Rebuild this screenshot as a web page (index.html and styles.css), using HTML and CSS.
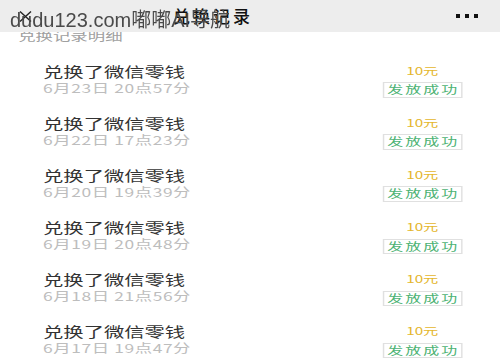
FILE: index.html
```html
<!DOCTYPE html>
<html lang="zh-CN">
<head>
<meta charset="utf-8">
<title>兑换记录</title>
<link rel="stylesheet" href="styles.css">
</head>
<body>
<header class="topbar">
  <svg class="close" width="13" height="11" viewBox="0 0 13 11"><path d="M1 0.5 L12 10.5 M12 0.5 L1 10.5" stroke="#222" stroke-width="1.4" fill="none"/></svg>
  <div class="title">兑换记录</div>
  <div class="more"><i></i><i></i><i></i></div>
</header>
<div class="watermark">dudu123.com嘟嘟AI导航</div>
<main class="app">
  <div class="section">兑换记录明细</div>
  <ul class="list">
    <li class="row"><div class="info"><div class="name">兑换了微信零钱</div><div class="date">6月23日 20点57分</div></div><div class="side"><div class="amount">10元</div><div class="status">发放成功</div></div></li>
    <li class="row"><div class="info"><div class="name">兑换了微信零钱</div><div class="date">6月22日 17点23分</div></div><div class="side"><div class="amount">10元</div><div class="status">发放成功</div></div></li>
    <li class="row"><div class="info"><div class="name">兑换了微信零钱</div><div class="date">6月20日 19点39分</div></div><div class="side"><div class="amount">10元</div><div class="status">发放成功</div></div></li>
    <li class="row"><div class="info"><div class="name">兑换了微信零钱</div><div class="date">6月19日 20点48分</div></div><div class="side"><div class="amount">10元</div><div class="status">发放成功</div></div></li>
    <li class="row"><div class="info"><div class="name">兑换了微信零钱</div><div class="date">6月18日 21点56分</div></div><div class="side"><div class="amount">10元</div><div class="status">发放成功</div></div></li>
    <li class="row"><div class="info"><div class="name">兑换了微信零钱</div><div class="date">6月17日 19点47分</div></div><div class="side"><div class="amount">10元</div><div class="status">发放成功</div></div></li>
  </ul>
</main>
</body>
</html>
```
FILE: styles.css
```css
html, body {
  margin: 0;
  padding: 0;
  background: #fff;
  overflow: hidden;
  font-family: "Noto Sans CJK SC", "Noto Sans", sans-serif;
}
.topbar {
  position: fixed;
  top: 0;
  left: 0;
  width: 500px;
  height: 32px;
  background: #ededed;
  display: flex;
  align-items: center;
  z-index: 2;
}
.close {
  margin-left: 19px;
  flex: none;
}
.title {
  margin-left: 141px;
  font-size: 17px;
  letter-spacing: 3px;
  color: #111;
  font-weight: 500;
  line-height: 20px;
}
.more {
  margin-left: auto;
  margin-right: 22px;
  display: flex;
  gap: 5px;
}
.more i {
  width: 4px;
  height: 4px;
  background: #111;
  display: block;
}
.watermark {
  position: fixed;
  top: 10px;
  left: 10px;
  font-family: "Liberation Sans", "Noto Sans CJK SC", sans-serif;
  font-size: 20px;
  line-height: 20px;
  color: #4a4a4a;
  z-index: 3;
  white-space: nowrap;
}
.app {
  width: 344.8px;
  transform: scaleX(1.45);
  transform-origin: 0 0;
  padding-top: 27.5px;
}
.section {
  padding-left: 12.5px;
  font-size: 12px;
  line-height: 16px;
  color: #a0a0a0;
  height: 16px;
}
.list {
  list-style: none;
  margin: 8.5px 0 0;
  padding: 0;
}
.row {
  display: flex;
  align-items: flex-start;
  height: 52.2px;
  box-sizing: border-box;
  padding: 9.5px 26.2px 0 29.7px;
}
.info {
  flex: 1;
}
.name {
  font-size: 14px;
  line-height: 18px;
  color: #333;
}
.date {
  font-size: 12px;
  line-height: 16px;
  letter-spacing: 0.4px;
  color: #bdbdbd;
}
.side {
  display: flex;
  flex-direction: column;
  align-items: center;
  padding-top: 1px;
}
.amount {
  font-size: 10.5px;
  line-height: 16px;
  color: #e4b62c;
  margin-bottom: 3.5px;
}
.status {
  font-size: 11px;
  line-height: 13.5px;
  letter-spacing: 1.4px;
  color: #4cb273;
  border: 1px solid #e0e0e0;
  padding: 0 0.9px 0 2.3px;
}
```
